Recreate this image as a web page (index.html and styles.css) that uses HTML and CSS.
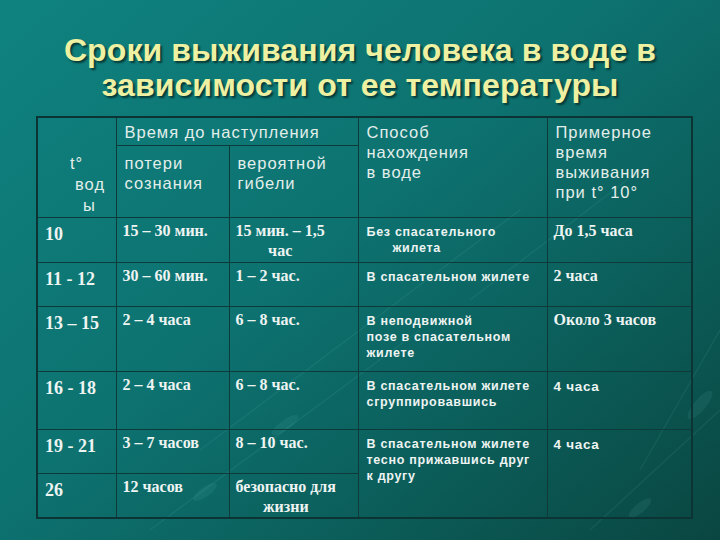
FILE: index.html
```html
<!DOCTYPE html>
<html lang="ru">
<head>
<meta charset="utf-8">
<title>Сроки выживания человека в воде</title>
<link rel="stylesheet" href="styles.css">
</head>
<body>
<div class="slide">
  <svg class="streaks" width="720" height="540" viewBox="0 0 720 540" aria-hidden="true">
    <g stroke="#7fd0c8" stroke-opacity="0.09" stroke-width="1.5" fill="none">
      <line x1="150" y1="530" x2="420" y2="330"/>
      <line x1="200" y1="450" x2="520" y2="210"/>
      <line x1="590" y1="530" x2="720" y2="410"/>
      <line x1="470" y1="300" x2="640" y2="170"/>
      <line x1="640" y1="470" x2="720" y2="330"/>
    </g>
    <g fill="#7fd0c8" fill-opacity="0.09">
      <ellipse cx="205" cy="492" rx="14" ry="5" transform="rotate(-35 205 492)"/>
      <ellipse cx="285" cy="425" rx="16" ry="5" transform="rotate(-35 285 425)"/>
      <ellipse cx="700" cy="405" rx="18" ry="6" transform="rotate(-50 700 405)"/>
      <ellipse cx="640" cy="508" rx="14" ry="5" transform="rotate(-40 640 508)"/>
    </g>
  </svg>
  <h1 class="title">Сроки выживания человека в воде в<br>зависимости от ее температуры</h1>
  <table class="grid">
    <colgroup>
      <col class="c1"><col class="c2"><col class="c3"><col class="c4"><col class="c5">
    </colgroup>
    <tr class="h1">
      <td rowspan="2" class="hd tw"><span class="l1">t°</span><span class="l2">вод</span><span class="l3">ы</span></td>
      <td colspan="2" class="hd span">Время до наступления</td>
      <td rowspan="2" class="hd top">Способ<br>нахождения<br>в воде</td>
      <td rowspan="2" class="hd top">Примерное<br>время<br>выживания<br>при t° 10°</td>
    </tr>
    <tr class="h2">
      <td class="hd sub">потери<br>сознания</td>
      <td class="hd sub">вероятной<br>гибели</td>
    </tr>
    <tr class="r10">
      <td class="num">10</td>
      <td class="sv">15 – 30 мин.</td>
      <td class="sv"><span class="ctr">15 мин. – 1,5<br>час</span></td>
      <td class="way">Без спасательного<br><span class="ind">жилета</span></td>
      <td class="sv">До 1,5 часа</td>
    </tr>
    <tr class="r11">
      <td class="num">11 - 12</td>
      <td class="sv">30 – 60 мин.</td>
      <td class="sv">1 – 2 час.</td>
      <td class="way">В спасательном жилете</td>
      <td class="sv">2 часа</td>
    </tr>
    <tr class="r13">
      <td class="num">13 – 15</td>
      <td class="sv">2 – 4 часа</td>
      <td class="sv">6 – 8 час.</td>
      <td class="way">В неподвижной<br>позе в спасательном<br>жилете</td>
      <td class="sv">Около 3 часов</td>
    </tr>
    <tr class="r16">
      <td class="num">16 - 18</td>
      <td class="sv">2 – 4 часа</td>
      <td class="sv">6 – 8 час.</td>
      <td class="way">В спасательном жилете<br>сгруппировавшись</td>
      <td class="way big">4 часа</td>
    </tr>
    <tr class="r19">
      <td class="num">19 - 21</td>
      <td class="sv">3 – 7 часов</td>
      <td class="sv">8 – 10 час.</td>
      <td rowspan="2" class="way">В спасательном жилете<br>тесно прижавшись друг<br>к другу</td>
      <td rowspan="2" class="way big">4 часа</td>
    </tr>
    <tr class="r26">
      <td class="num">26</td>
      <td class="sv">12 часов</td>
      <td class="sv"><span class="ctr">безопасно для<br>жизни</span></td>
    </tr>
  </table>
</div>
</body>
</html>
```
FILE: styles.css
```css
html, body {
  margin: 0;
  padding: 0;
}
.slide {
  position: relative;
  width: 720px;
  height: 540px;
  overflow: hidden;
  background: linear-gradient(140deg, #0f827f 0%, #0d7270 45%, #0b5b57 75%, #0a4641 100%);
  font-family: "Liberation Sans", Arial, sans-serif;
  display: flex;
  flex-direction: column;
  align-items: flex-start;
}
.streaks {
  position: absolute;
  left: 0;
  top: 0;
}
.title {
  position: relative;
  align-self: center;
  margin: 33px 0 0 0;
  font-size: 32px;
  line-height: 35px;
  font-weight: bold;
  text-align: center;
  color: #eef0a2;
  text-shadow: 2px 2px 2px #063a38;
  letter-spacing: 0.1px;
}
.grid {
  position: relative;
  margin: 13px 0 0 36px;
  width: 657px;
  table-layout: fixed;
  border-collapse: collapse;
  border: 2px solid #0c3434;
  color: #eef4f2;
}
.c1 { width: 79px; }
.c2 { width: 113px; }
.c3 { width: 129px; }
.c4 { width: 189px; }
.c5 { width: 145px; }
.grid td {
  border: 1px solid #0e3a3a;
  vertical-align: top;
  padding: 0 0 0 6px;
}
.h1 { height: 28px; }
.h2 { height: 72px; }
.r10 { height: 45px; }
.r11 { height: 44px; }
.r13 { height: 65px; }
.r16 { height: 58px; }
.r19 { height: 44px; }
.r26 { height: 45px; }

.hd {
  font-size: 16.5px;
  line-height: 20px;
  letter-spacing: 1px;
  color: #e2eeea;
}
.hd.span { padding-top: 4px; padding-left: 8px; }
.hd.sub { padding-top: 7px; padding-left: 8px; }
.hd.top { padding-top: 4px; padding-left: 8px; }
.tw { padding-top: 35px !important; }
.tw span { display: block; line-height: 21px; }
.tw .l1 { padding-left: 26px; }
.tw .l2 { padding-left: 31px; }
.tw .l3 { padding-left: 39px; }

.num {
  font-family: "Liberation Serif", "Times New Roman", serif;
  font-weight: bold;
  font-size: 18px;
  line-height: 22px;
  padding-top: 5px !important;
  padding-left: 7px !important;
}
.sv {
  font-family: "Liberation Serif", "Times New Roman", serif;
  font-weight: bold;
  font-size: 16px;
  line-height: 20px;
  padding-top: 3px !important;
  padding-left: 6px !important;
}
.ctr {
  display: inline-block;
  text-align: center;
}
.way {
  font-size: 12.5px;
  font-weight: bold;
  letter-spacing: 0.7px;
  line-height: 16px;
  padding-top: 6px !important;
  padding-left: 8px !important;
}
.way .ind { padding-left: 26px; }
.way.big {
  font-size: 13.5px;
  padding-top: 7px !important;
  padding-left: 6px !important;
}
```
